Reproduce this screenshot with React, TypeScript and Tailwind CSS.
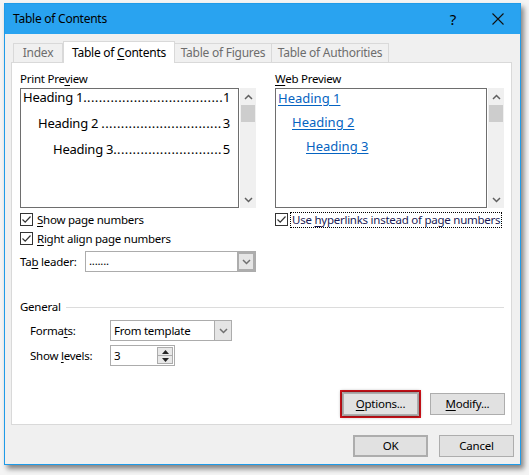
import React from 'react'

const font = { fontFamily: '"Noto Sans", "Open Sans", sans-serif' }

function U({ children }: { children: React.ReactNode }) {
  return <span className="underline underline-offset-2">{children}</span>
}

function Check({ className = '' }: { className?: string }) {
  return (
    <span
      className={`flex h-[13px] w-[13px] shrink-0 items-center justify-center border border-[#333] bg-white ${className}`}
    >
      <svg width="11" height="11" viewBox="0 0 11 11">
        <path d="M1.5 5.5 L4.2 8.2 L9.5 2.5" fill="none" stroke="#333" strokeWidth="1.2" />
      </svg>
    </span>
  )
}

function Chevron({ dir, color = '#606060' }: { dir: 'up' | 'down'; color?: string }) {
  return (
    <svg width="9" height="6" viewBox="0 0 9 6">
      <path
        d={dir === 'up' ? 'M1 5 L4.5 1.5 L8 5' : 'M1 1 L4.5 4.5 L8 1'}
        fill="none"
        stroke={color}
        strokeWidth="1.5"
      />
    </svg>
  )
}

function ScrollBar() {
  return (
    <div className="flex w-[16px] flex-col bg-[#f0f0f0]">
      <div className="flex h-[17px] items-center justify-center">
        <Chevron dir="up" />
      </div>
      <div className="mx-px h-[17px] bg-[#cdcdcd]" />
      <div className="flex-1" />
      <div className="flex h-[17px] items-center justify-center">
        <Chevron dir="down" />
      </div>
    </div>
  )
}

function Leader({
  label,
  num,
  dots,
  indent,
}: {
  label: string
  num: string
  dots: number
  indent: string
}) {
  return (
    <div
      className={`flex h-[26px] items-center justify-between whitespace-nowrap text-[13px] text-black first:-mt-[4px] ${indent}`}
    >
      <span>
        {label}
        <span className="tracking-[0.4px]">{'.'.repeat(dots)}</span>
      </span>
      <span>{num}</span>
    </div>
  )
}

function Select({ value, width }: { value: string; width: string }) {
  return (
    <div className={`flex h-[21px] border border-[#acacac] bg-white ${width}`}>
      <span className="flex-1 pl-[3px] leading-[19px] text-black">{value}</span>
      <span className="flex w-[17px] items-center justify-center border-l border-[#acacac] bg-[#e5e5e5]">
        <Chevron dir="down" color="#707070" />
      </span>
    </div>
  )
}

function Button({
  children,
  className = '',
}: {
  children: React.ReactNode
  className?: string
}) {
  return (
    <div
      className={`flex h-[22px] w-[75px] items-center justify-center border border-[#adadad] bg-[#e1e1e1] text-black ${className}`}
    >
      {children}
    </div>
  )
}

export default function App() {
  const tabs = [
    { label: 'Index', w: 'w-[50px]' },
    { label: 'Table of Contents', w: 'w-[112px]', active: true },
    { label: 'Table of Figures', w: 'w-[98px]' },
    { label: 'Table of Authorities', w: 'w-[118px]' },
  ]

  return (
    <div
      className="h-[475px] w-[529px] overflow-hidden bg-[#f4f4f4] pl-[4px] pt-[3px] text-[11.5px] tracking-[-0.25px]"
      style={font}
    >
      <div className="flex h-[462px] w-[517px] flex-col border border-[#1f9be8] bg-[#f0f0f0] shadow-[3px_4px_5px_rgba(0,0,0,0.45)]">
        {/* title bar */}
        <div className="flex h-[30px] shrink-0 items-center bg-[#29a3f0] pl-[8px] text-[12px] text-black">
          <span className="flex-1">Table of Contents</span>
          <span className="mr-[36px] text-[15px]">?</span>
          <svg width="12" height="12" viewBox="0 0 12 12" className="mr-[16px]">
            <path d="M0.5 0.5 L11.5 11.5 M11.5 0.5 L0.5 11.5" stroke="#111" strokeWidth="1.1" />
          </svg>
        </div>

        {/* body */}
        <div className="flex flex-1 flex-col pl-[6px] pr-[8px] pt-[7px]">
          {/* tabs */}
          <div className="flex h-[21px] items-end pl-[2px]">
            {tabs.map((t) =>
              t.active ? (
                <div
                  key={t.label}
                  className={`relative z-10 -mb-px flex h-[22px] items-center justify-center border border-b-0 border-[#d9d9d9] bg-white text-[12px] text-black ${t.w}`}
                >
                  <span>
                    Table of <U>C</U>ontents
                  </span>
                </div>
              ) : (
                <div
                  key={t.label}
                  className={`-ml-px flex h-[19px] items-center justify-center border border-b-0 border-[#d9d9d9] bg-[#f0f0f0] text-[12px] text-[#6d6d6d] first:ml-0 ${t.w}`}
                >
                  {t.label}
                </div>
              ),
            )}
          </div>

          {/* panel */}
          <div className="flex h-[363px] flex-col border border-[#d9d9d9] bg-white px-[8px] pt-[8px] text-black">
            <div className="flex h-[226px]">
              {/* left column */}
              <div className="flex w-[236px] flex-col">
                <div className="h-[17px] leading-[16px]">
                  Print Pre<U>v</U>iew
                </div>
                <div className="flex h-[120px]">
                  <div className="w-[219px] border border-[#6e6e6e] bg-white pl-[2px] pr-[8px]">
                    <Leader label="Heading 1" num="1" dots={36} indent="" />
                    <Leader label="Heading 2 " num="3" dots={31} indent="pl-[15px]" />
                    <Leader label="Heading 3" num="5" dots={28} indent="pl-[30px]" />
                  </div>
                  <div className="ml-[1px] flex">
                    <ScrollBar />
                  </div>
                </div>
                <div className="mt-[2px] flex h-[19px] items-center gap-[4px]">
                  <Check />
                  <span>
                    <U>S</U>how page numbers
                  </span>
                </div>
                <div className="flex h-[19px] items-center gap-[4px]">
                  <Check />
                  <span>
                    <U>R</U>ight align page numbers
                  </span>
                </div>
                <div className="mt-[3px] flex h-[21px] items-center">
                  <span className="w-[65px]">
                    Ta<U>b</U> leader:
                  </span>
                  <div className="flex h-[21px] flex-1 border border-[#acacac] bg-white">
                    <span className="flex-1 pl-[3px] leading-[17px]">.......</span>
                    <span className="flex w-[18px] items-center justify-center border-2 border-[#adadad] bg-[#e5e5e5]">
                      <Chevron dir="down" color="#707070" />
                    </span>
                  </div>
                </div>
              </div>

              {/* separator */}
              <div className="-mt-px ml-[9px] w-px bg-[#a0a0a0]" />

              {/* right column */}
              <div className="ml-[10px] flex w-[229px] flex-col">
                <div className="h-[17px] leading-[16px]">
                  <U>W</U>eb Preview
                </div>
                <div className="flex h-[120px]">
                  <div className="flex w-[212px] flex-col border border-[#6e6e6e] bg-white pl-[2px] text-[13px] tracking-normal text-[#0563c1]">
                    <span className="h-[24px] leading-[18px] underline underline-offset-2">Heading 1</span>
                    <span className="h-[24px] pl-[14px] leading-[18px] underline underline-offset-2">Heading 2</span>
                    <span className="h-[24px] pl-[28px] leading-[18px] underline underline-offset-2">Heading 3</span>
                  </div>
                  <div className="ml-[1px] flex">
                    <ScrollBar />
                  </div>
                </div>
                <div className="mt-[2px] flex h-[19px] items-center gap-[2px] whitespace-nowrap">
                  <Check />
                  <span className="border border-dotted border-black px-px leading-[14px] text-[#1a1a55]">
                    Use <U>h</U>yperlinks instead of page numbers
                  </span>
                </div>
              </div>
            </div>

            {/* general */}
            <div className="flex h-[20px] items-center">
              <span>General</span>
              <span className="-mr-px ml-[5px] h-px flex-1 bg-[#dcdcdc]" />
            </div>
            <div className="mt-[3px] flex h-[21px] items-center pl-[10px]">
              <span className="w-[80px]">
                Forma<U>t</U>s:
              </span>
              <Select value="From template" width="w-[122px]" />
            </div>
            <div className="mt-[4px] flex h-[21px] items-center pl-[10px]">
              <span className="w-[80px]">
                Show <U>l</U>evels:
              </span>
              <div className="flex h-[21px] w-[65px] border border-[#acacac] bg-white">
                <span className="flex-1 pl-[3px] leading-[19px]">3</span>
                <span className="my-[1px] mr-[1px] flex w-[16px] flex-col border border-[#acacac] bg-[#e8e8e8]">
                  <span className="flex flex-1 items-center justify-center border-b border-[#acacac]">
                    <svg width="7" height="4" viewBox="0 0 7 4">
                      <path d="M0 4 L3.5 0 L7 4 Z" fill="#222" />
                    </svg>
                  </span>
                  <span className="flex flex-1 items-center justify-center">
                    <svg width="7" height="4" viewBox="0 0 7 4">
                      <path d="M0 0 L3.5 4 L7 0 Z" fill="#222" />
                    </svg>
                  </span>
                </span>
              </div>
            </div>

            <div className="-mr-[2px] flex flex-1 items-end justify-end pb-[6px]">
              <div className="mr-[9px] border-2 border-[#e8141c] p-px">
                <Button className="w-[71px] shadow-[0_0_3px_2px_rgba(0,0,0,0.45)]">
                  <span>
                    <U>O</U>ptions...
                  </span>
                </Button>
              </div>
              <div className="pb-[3px]">
                <Button className="w-[74px]">
                  <span>
                    <U>M</U>odify...
                  </span>
                </Button>
              </div>
            </div>
          </div>

          {/* dialog buttons */}
          <div className="-mr-[2px] mt-[10px] flex justify-end gap-[11px]">
            <Button className="w-[74px] border-2 border-[#0078d7]">OK</Button>
            <Button>Cancel</Button>
          </div>
        </div>
      </div>
    </div>
  )
}
